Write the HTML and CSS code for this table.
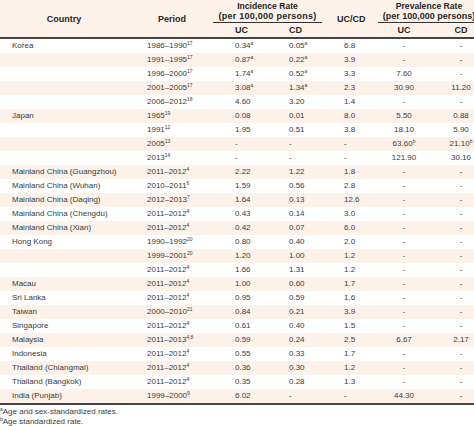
FILE: index.html
```html
<!DOCTYPE html>
<html>
<head>
<meta charset="utf-8">
<link rel="stylesheet" href="styles.css">
</head>
<body>
<div class="page">
<table class="tbl">
<colgroup>
<col class="c1"><col class="c2"><col class="c3"><col class="c4"><col class="c5"><col class="c6"><col class="c7">
</colgroup>
<thead>
<tr class="h1">
<th rowspan="2" class="hc-country">Country</th>
<th rowspan="2" class="hc-period">Period</th>
<th colspan="2" class="hc-inc"><div class="grp grp-inc"><span class="gt">Incidence Rate</span><span class="gs">(per 100,000 persons)</span></div></th>
<th rowspan="2" class="hc-ratio">UC/CD</th>
<th colspan="2" class="hc-prev"><div class="grp grp-prev"><span class="gt">Prevalence Rate</span><span class="gs gs-prev">(per 100,000 persons)</span></div></th>
</tr>
<tr class="h2">
<th class="hl">UC</th>
<th class="hl">CD</th>
<th class="hm6">UC</th>
<th class="hm7">CD</th>
</tr>
</thead>
<tbody>
<tr><td>Korea</td><td>1986–1990<sup>17</sup></td><td>0.34<sup>a</sup></td><td>0.05<sup>a</sup></td><td class="r">6.8</td><td class="p6">-</td><td class="p7">-</td></tr>
<tr><td></td><td>1991–1995<sup>17</sup></td><td>0.87<sup>a</sup></td><td>0.22<sup>a</sup></td><td class="r">3.9</td><td class="p6">-</td><td class="p7">-</td></tr>
<tr><td></td><td>1996–2000<sup>17</sup></td><td>1.74<sup>a</sup></td><td>0.52<sup>a</sup></td><td class="r">3.3</td><td class="p6">7.60</td><td class="p7">-</td></tr>
<tr><td></td><td>2001–2005<sup>17</sup></td><td>3.08<sup>a</sup></td><td>1.34<sup>a</sup></td><td class="r">2.3</td><td class="p6">30.90</td><td class="p7">11.20</td></tr>
<tr><td></td><td>2006–2012<sup>18</sup></td><td>4.60</td><td>3.20</td><td class="r">1.4</td><td class="p6">-</td><td class="p7">-</td></tr>
<tr><td>Japan</td><td>1965<sup>19</sup></td><td>0.08</td><td>0.01</td><td class="r">8.0</td><td class="p6">5.50</td><td class="p7">0.88</td></tr>
<tr><td></td><td>1991<sup>12</sup></td><td>1.95</td><td>0.51</td><td class="r">3.8</td><td class="p6">18.10</td><td class="p7">5.90</td></tr>
<tr><td></td><td>2005<sup>13</sup></td><td>-</td><td>-</td><td class="r">-</td><td class="p6">63.60<sup>b</sup></td><td class="p7">21.10<sup>b</sup></td></tr>
<tr><td></td><td>2013<sup>14</sup></td><td>-</td><td>-</td><td class="r">-</td><td class="p6">121.90</td><td class="p7">30.10</td></tr>
<tr><td>Mainland China (Guangzhou)</td><td>2011–2012<sup>4</sup></td><td>2.22</td><td>1.22</td><td class="r">1.8</td><td class="p6">-</td><td class="p7">-</td></tr>
<tr><td>Mainland China (Wuhan)</td><td>2010–2011<sup>6</sup></td><td>1.59</td><td>0.56</td><td class="r">2.8</td><td class="p6">-</td><td class="p7">-</td></tr>
<tr><td>Mainland China (Daqing)</td><td>2012–2013<sup>7</sup></td><td>1.64</td><td>0.13</td><td class="r">12.6</td><td class="p6">-</td><td class="p7">-</td></tr>
<tr><td>Mainland China (Chengdu)</td><td>2011–2012<sup>4</sup></td><td>0.43</td><td>0.14</td><td class="r">3.0</td><td class="p6">-</td><td class="p7">-</td></tr>
<tr><td>Mainland China (Xian)</td><td>2011–2012<sup>4</sup></td><td>0.42</td><td>0.07</td><td class="r">6.0</td><td class="p6">-</td><td class="p7">-</td></tr>
<tr><td>Hong Kong</td><td>1990–1992<sup>20</sup></td><td>0.80</td><td>0.40</td><td class="r">2.0</td><td class="p6">-</td><td class="p7">-</td></tr>
<tr><td></td><td>1999–2001<sup>20</sup></td><td>1.20</td><td>1.00</td><td class="r">1.2</td><td class="p6">-</td><td class="p7">-</td></tr>
<tr><td></td><td>2011–2012<sup>4</sup></td><td>1.66</td><td>1.31</td><td class="r">1.2</td><td class="p6">-</td><td class="p7">-</td></tr>
<tr><td>Macau</td><td>2011–2012<sup>4</sup></td><td>1.00</td><td>0.60</td><td class="r">1.7</td><td class="p6">-</td><td class="p7">-</td></tr>
<tr><td>Sri Lanka</td><td>2011–2012<sup>4</sup></td><td>0.95</td><td>0.59</td><td class="r">1.6</td><td class="p6">-</td><td class="p7">-</td></tr>
<tr><td>Taiwan</td><td>2000–2010<sup>21</sup></td><td>0.84</td><td>0.21</td><td class="r">3.9</td><td class="p6">-</td><td class="p7">-</td></tr>
<tr><td>Singapore</td><td>2011–2012<sup>4</sup></td><td>0.61</td><td>0.40</td><td class="r">1.5</td><td class="p6">-</td><td class="p7">-</td></tr>
<tr><td>Malaysia</td><td>2011–2013<sup>4,8</sup></td><td>0.59</td><td>0.24</td><td class="r">2.5</td><td class="p6">6.67</td><td class="p7">2.17</td></tr>
<tr><td>Indonesia</td><td>2011–2012<sup>4</sup></td><td>0.55</td><td>0.33</td><td class="r">1.7</td><td class="p6">-</td><td class="p7">-</td></tr>
<tr><td>Thailand (Chiangmai)</td><td>2011–2012<sup>4</sup></td><td>0.36</td><td>0.30</td><td class="r">1.2</td><td class="p6">-</td><td class="p7">-</td></tr>
<tr><td>Thailand (Bangkok)</td><td>2011–2012<sup>4</sup></td><td>0.35</td><td>0.28</td><td class="r">1.3</td><td class="p6">-</td><td class="p7">-</td></tr>
<tr><td>India (Punjab)</td><td>1999–2000<sup>9</sup></td><td>6.02</td><td>-</td><td class="r">-</td><td class="p6">44.30</td><td class="p7">-</td></tr>
</tbody>
</table>
<div class="notes">
<p><sup>a</sup>Age and sex-standardized rates.</p>
<p><sup>b</sup>Age standardized rate.</p>
</div>
</div>
</body>
</html>
```

FILE: styles.css
```css
html, body {
  margin: 0;
  padding: 0;
  background: #ffffff;
  overflow: hidden;
}
.page {
  width: 474px;
  overflow: hidden;
  font-family: "Liberation Sans Narrow", "Liberation Sans", Arial, sans-serif;
  color: #3a3a3a;
}
.tbl {
  border-collapse: collapse;
  table-layout: fixed;
  width: 474px;
}
.c1 { width: 143px; }
.c2 { width: 90px; }
.c3 { width: 54px; }
.c4 { width: 48px; }
.c5 { width: 35px; }
.c6 { width: 78px; }
.c7 { width: 26px; }

thead th {
  background: #fdf2ea;
  color: #262626;
  font-weight: bold;
  font-size: 9px;
  padding: 0;
  white-space: nowrap;
  vertical-align: middle;
}
.h1 { height: 24px; }
.h2 { height: 13px; }
.h2 th {
  border-bottom: 2px solid #444;
  line-height: 13px;
}
.hc-country { text-align: center; padding-right: 15px; }
.hc-period { text-align: center; padding-right: 32px; }
.hc-ratio { text-align: left; padding-left: 2px; }
.hc-country, .hc-period, .hc-ratio { border-bottom: 2px solid #444; }
.hc-inc, .hc-prev { vertical-align: top; }
.grp {
  display: flex;
  flex-direction: column;
  align-items: center;
  line-height: 10px;
  padding-top: 1px;
  height: 23px;
  box-sizing: border-box;
  border-bottom: 1px solid #333;
}
.gt { font-size: 8.6px; }
.gs { font-size: 9px; letter-spacing: 0.25px; }
.gs-prev { letter-spacing: 0; }
.grp-inc { margin-left: -20px; width: 109px; }
.grp-prev { margin-left: 8px; width: 102px; }
.hl { text-align: left; padding-left: 2px; }
.hm6 { text-align: center; padding-right: 10px; }
.hm7 { text-align: center; }

tbody td {
  font-size: 8px;
  height: 14px;
  line-height: 14px;
  padding: 0 0 0 2px;
  white-space: nowrap;
  vertical-align: middle;
}
tbody td:first-child { padding-left: 12px; }
tbody td:nth-child(2) { padding-left: 4px; }
tbody td.r { padding-left: 9px; }
tbody td.p6 { text-align: center; padding: 0 10px 0 0; }
tbody td.p7 { text-align: center; padding: 0; }
tbody tr:nth-child(even) td { background: #fdf2ea; }
tbody tr:last-child td { border-bottom: 2px solid #444; }

sup {
  font-size: 5px;
  line-height: 0;
  vertical-align: 3px;
}

.notes {
  font-size: 8px;
  line-height: 10px;
  padding-top: 2px;
}
.notes p { margin: 0; }
```
